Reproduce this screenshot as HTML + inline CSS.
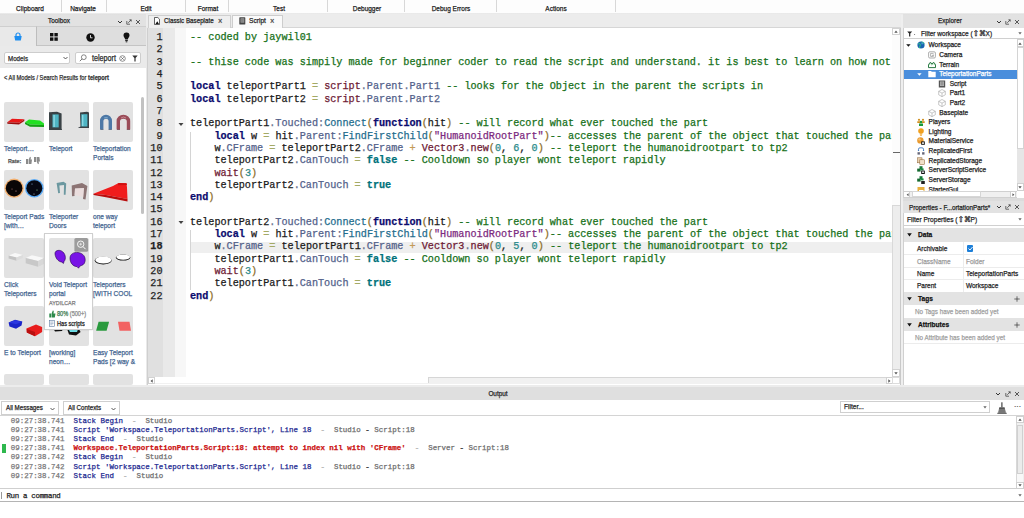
<!DOCTYPE html>
<html><head><meta charset="utf-8"><style>
html,body{margin:0;padding:0;}
body{width:1024px;height:518px;overflow:hidden;position:relative;background:#fff;font-family:"Liberation Sans",sans-serif;}
.r{position:absolute;}
.t{position:absolute;white-space:pre;-webkit-text-stroke:0.25px currentColor;}
.mono{font-family:"Liberation Mono",monospace;}
svg.r{overflow:visible;}
</style></head><body>
<div class="r" style="left:0px;top:0px;width:1024px;height:13px;background:#fdfdfd"></div>
<div class="r" style="left:0px;top:13px;width:1024px;height:2px;background:linear-gradient(#eeeeee,#dcdcdc)"></div>
<div class="r" style="left:60.6px;top:0px;width:0.8px;height:12px;background:#d8d8d8"></div>
<div class="r" style="left:105.5px;top:0px;width:0.8px;height:12px;background:#d8d8d8"></div>
<div class="r" style="left:185.2px;top:0px;width:0.8px;height:12px;background:#d8d8d8"></div>
<div class="r" style="left:228.4px;top:0px;width:0.8px;height:12px;background:#d8d8d8"></div>
<div class="r" style="left:327.2px;top:0px;width:0.8px;height:12px;background:#d8d8d8"></div>
<div class="r" style="left:403.9px;top:0px;width:0.8px;height:12px;background:#d8d8d8"></div>
<div class="r" style="left:496px;top:0px;width:0.8px;height:12px;background:#d8d8d8"></div>
<div class="r" style="left:615.4px;top:0px;width:0.8px;height:12px;background:#d8d8d8"></div>
<div class="t" style="left:-19.85px;top:4.10px;font-size:7.475px;line-height:10px;color:#1a1a1a;font-weight:normal;font-family:'Liberation Sans', sans-serif;transform:scaleX(0.8696);transform-origin:50% 50%;width:100px;text-align:center">Clipboard</div>
<div class="t" style="left:33.44999999999999px;top:4.10px;font-size:7.475px;line-height:10px;color:#1a1a1a;font-weight:normal;font-family:'Liberation Sans', sans-serif;transform:scaleX(0.8696);transform-origin:50% 50%;width:100px;text-align:center">Navigate</div>
<div class="t" style="left:95.94999999999999px;top:4.10px;font-size:7.475px;line-height:10px;color:#1a1a1a;font-weight:normal;font-family:'Liberation Sans', sans-serif;transform:scaleX(0.8696);transform-origin:50% 50%;width:100px;text-align:center">Edit</div>
<div class="t" style="left:157.5px;top:4.10px;font-size:7.475px;line-height:10px;color:#1a1a1a;font-weight:normal;font-family:'Liberation Sans', sans-serif;transform:scaleX(0.8696);transform-origin:50% 50%;width:100px;text-align:center">Format</div>
<div class="t" style="left:228.8px;top:4.10px;font-size:7.475px;line-height:10px;color:#1a1a1a;font-weight:normal;font-family:'Liberation Sans', sans-serif;transform:scaleX(0.8696);transform-origin:50% 50%;width:100px;text-align:center">Test</div>
<div class="t" style="left:316.5px;top:4.10px;font-size:7.475px;line-height:10px;color:#1a1a1a;font-weight:normal;font-family:'Liberation Sans', sans-serif;transform:scaleX(0.8696);transform-origin:50% 50%;width:100px;text-align:center">Debugger</div>
<div class="t" style="left:400.55px;top:4.10px;font-size:7.475px;line-height:10px;color:#1a1a1a;font-weight:normal;font-family:'Liberation Sans', sans-serif;transform:scaleX(0.8696);transform-origin:50% 50%;width:100px;text-align:center">Debug Errors</div>
<div class="t" style="left:506.4000000000001px;top:4.10px;font-size:7.475px;line-height:10px;color:#1a1a1a;font-weight:normal;font-family:'Liberation Sans', sans-serif;transform:scaleX(0.8696);transform-origin:50% 50%;width:100px;text-align:center">Actions</div>
<div class="r" style="left:0px;top:15px;width:1024px;height:370px;background:#dcdcdc"></div>
<div class="r" style="left:0px;top:15px;width:145.5px;height:11.3px;background:#e2e2e2"></div>
<div class="t" style="left:38.5px;top:16.00px;font-size:7.360px;line-height:10px;color:#1e1e1e;font-weight:normal;font-family:'Liberation Sans', sans-serif;transform:scaleX(0.8696);transform-origin:50% 50%;width:40px;text-align:center">Toolbox</div>
<svg class="r" style="left:116.7px;top:18.6px" width="6" height="6" viewBox="0 0 6 6"><path d="M1 2 L3 4 L5 2" stroke="#333" stroke-width="1" fill="none"/></svg>
<svg class="r" style="left:125.5px;top:18.6px" width="6" height="6" viewBox="0 0 6 6"><path d="M0.8 2 V5.2 H4 M2.2 3.8 L5.2 0.8 M3.4 0.8 H5.2 V2.6" stroke="#333" stroke-width="0.7" fill="none"/></svg>
<svg class="r" style="left:135px;top:18.6px" width="6" height="6" viewBox="0 0 6 6"><path d="M1 1 L5 5 M5 1 L1 5" stroke="#333" stroke-width="0.8" fill="none"/></svg>
<div class="r" style="left:0px;top:26.3px;width:145.5px;height:19px;background:#dedede;border-top:0.6px solid #cfcfcf;box-sizing:border-box"></div>
<div class="r" style="left:0px;top:26.3px;width:36.5px;height:19.5px;background:#e9e9e9;border-top:0.6px solid #cfcfcf;border-right:0.8px solid #bdbdbd;box-sizing:border-box"></div>
<div class="r" style="left:36.5px;top:44.6px;width:109px;height:0.9px;background:#c4c4c4"></div>
<svg class="r" style="left:12.5px;top:31.5px" width="10" height="10" viewBox="0 0 10 10"><path d="M3 4 V3 A2 2 0 0 1 7 3 V4" stroke="#1d8ef0" stroke-width="1.2" fill="none"/><path d="M1.3 4 H8.7 L7.8 8.6 H2.2 Z" fill="#1d8ef0"/></svg>
<svg class="r" style="left:49.9px;top:33px" width="8" height="8" viewBox="0 0 8 8"><rect x="0" y="0" width="3.4" height="3.4" fill="#111"/><rect x="4.4" y="0" width="3.4" height="3.4" fill="#111"/><rect x="0" y="4.4" width="3.4" height="3.4" fill="#111"/><rect x="4.4" y="4.4" width="3.4" height="3.4" fill="#111"/></svg>
<svg class="r" style="left:86px;top:32.5px" width="9" height="9" viewBox="0 0 9 9"><circle cx="4.5" cy="4.5" r="4.2" fill="#111"/><path d="M4.5 2 V4.8 H6.5" stroke="#e9e9e9" stroke-width="0.9" fill="none"/></svg>
<svg class="r" style="left:123.2px;top:31.5px" width="7" height="11" viewBox="0 0 7 11"><path d="M3.5 0.5 A3 3 0 0 1 6.5 3.6 C6.5 5.2 5 6 4.8 7.6 H2.2 C2 6 0.5 5.2 0.5 3.6 A3 3 0 0 1 3.5 0.5 Z" fill="#111"/><rect x="2.2" y="8.1" width="2.6" height="1" fill="#111"/><rect x="2.7" y="9.4" width="1.6" height="0.9" fill="#111"/></svg>
<div class="r" style="left:0px;top:45.5px;width:145.5px;height:23.5px;background:#eaeaea"></div>
<div class="r" style="left:4px;top:51.7px;width:66px;height:12.6px;background:#fff;border:0.7px solid #cdcdcd;border-radius:2px;box-sizing:border-box"></div>
<div class="t" style="left:8px;top:53.80px;font-size:7.130px;line-height:10px;color:#2a2a2a;font-weight:normal;font-family:'Liberation Sans', sans-serif;transform:scaleX(0.8696);transform-origin:0 50%;">Models</div>
<svg class="r" style="left:62.5px;top:56px" width="5" height="4" viewBox="0 0 5 4"><path d="M0.5 1 L2.5 3 L4.5 1" stroke="#333" stroke-width="0.8" fill="none"/></svg>
<div class="r" style="left:75px;top:51.7px;width:66px;height:12.6px;background:#fff;border:0.7px solid #cdcdcd;border-radius:2px;box-sizing:border-box"></div>
<svg class="r" style="left:79px;top:54.3px" width="8" height="8" viewBox="0 0 8 8"><circle cx="4.8" cy="3.2" r="2.4" stroke="#555" stroke-width="0.7" fill="none"/><path d="M3.1 4.9 L0.8 7.2" stroke="#555" stroke-width="0.8"/></svg>
<div class="t" style="left:91.8px;top:54.00px;font-size:8.280px;line-height:10px;color:#2a2a2a;font-weight:normal;font-family:'Liberation Sans', sans-serif;transform:scaleX(0.8696);transform-origin:0 50%;">teleport</div>
<svg class="r" style="left:118.7px;top:54.6px" width="7" height="7" viewBox="0 0 7 7"><circle cx="3.5" cy="3.5" r="2.8" stroke="#444" stroke-width="0.6" fill="none"/><path d="M2.2 2.2 L4.8 4.8 M4.8 2.2 L2.2 4.8" stroke="#444" stroke-width="0.6"/></svg>
<svg class="r" style="left:131.5px;top:54.5px" width="6" height="7" viewBox="0 0 6 7"><path d="M0.3 0.5 H5.7 L3.6 3 V6.5 H2.4 V3 Z" fill="#333"/></svg>
<div class="r" style="left:0px;top:68px;width:145.5px;height:317px;background:#fff"></div>
<div class="t" style="left:4.3px;top:73.40px;font-size:6.555px;line-height:10px;color:#333;font-weight:normal;font-family:'Liberation Sans', sans-serif;transform:scaleX(0.8696);transform-origin:0 50%;">&lt; All Models / Search Results for <b>teleport</b></div>
<div class="r" style="left:141.2px;top:97px;width:3px;height:116.5px;background:#c2c2c2;border-radius:1.5px"></div>
<div class="r" style="left:4.3px;top:102px;width:40px;height:40px;background:#e2e2e2;border-radius:2px;overflow:hidden"><svg width="40" height="40" viewBox="0 0 40 40" style="position:absolute;left:0;top:0"><path d="M3.2 20.2 L8 16.8 L20.3 17.3 L15 20.8 Z" fill="#e81818"/><path d="M3.2 20.2 L15 20.8 L15 22.6 L3.4 21.8 Z" fill="#9a0c0c"/><path d="M15 20.8 L20.3 17.3 V19 L15 22.6 Z" fill="#b01010"/><path d="M21 20.2 L25 17.4 L36 18.6 L40 21.5 V23 L26 22.6 Z" fill="#22e022"/><path d="M21 20.2 L26 22.6 L40 23 V25 L26 24.8 L21 22 Z" fill="#14a014"/></svg></div>
<div class="r" style="left:49.1px;top:102px;width:40px;height:40px;background:#e2e2e2;border-radius:2px;overflow:hidden"><svg width="40" height="40" viewBox="0 0 40 40" style="position:absolute;left:0;top:0"><path d="M-0.6 10.2 L8 9.7 L12.6 11.6 V26.6 L13.1 28.1 L-0.6 28.1 Z" fill="#3a4246"/><rect x="3.5" y="12.4" width="6.2" height="13" fill="#4fb5c4"/><rect x="4.5" y="13" width="1.2" height="12" fill="#9ae0ea"/><path d="M31 10.5 L38 9.7 L40 10.5 V26.1 L28.8 26.1 L31.5 24.5 Z" fill="#3a4246"/><rect x="32.3" y="12.2" width="6.1" height="12.3" fill="#4fb5c4"/><rect x="33.2" y="13" width="1.1" height="11" fill="#9ae0ea"/></svg></div>
<div class="r" style="left:93.3px;top:102px;width:40px;height:40px;background:#e2e2e2;border-radius:2px;overflow:hidden"><svg width="40" height="40" viewBox="0 0 40 40" style="position:absolute;left:0;top:0"><path d="M7 27.5 V19 A6 6.3 0 0 1 19 19 V27.5 H15.6 V19.5 A2.6 2.8 0 0 0 10.4 19.5 V27.5 Z" fill="#4d78a6"/><path d="M7.5 27.5 H10.4 V28.1 H7.5 Z M15.6 27.5 H18.8 V28.1 H15.6 Z" fill="#2a3a50"/><path d="M23.6 27.5 V19 A6.8 6.3 0 0 1 37.2 19 V27.5 H33.8 V19.5 A3.4 2.8 0 0 0 27 19.5 V27.5 Z" fill="#9a4c58"/><path d="M24 27.5 H27 V28.1 H24 Z M33.8 27.5 H37 V28.1 H33.8 Z" fill="#502028"/><path d="M11 16 A4 4 0 0 1 15 16" stroke="#8ab8d8" stroke-width="0.7" fill="none"/><path d="M28 16 A4 4 0 0 1 33 16" stroke="#d8a0a8" stroke-width="0.7" fill="none"/></svg></div>
<div class="r" style="left:4.3px;top:170px;width:40px;height:40px;background:#e2e2e2;border-radius:2px;overflow:hidden"><svg width="40" height="40" viewBox="0 0 40 40" style="position:absolute;left:0;top:0"><circle cx="10.1" cy="18.2" r="9.6" fill="#f2b070"/><circle cx="10.1" cy="18.2" r="8.3" fill="#0a0606"/><circle cx="30.3" cy="18.2" r="9.3" fill="#5aaaf5"/><circle cx="30.3" cy="18.2" r="8" fill="#060812"/><circle cx="8" cy="19" r="0.5" fill="#c88"/><circle cx="12" cy="21" r="0.5" fill="#fbb"/><circle cx="28" cy="14" r="0.5" fill="#9cf"/><circle cx="33" cy="20" r="0.5" fill="#afa"/><circle cx="30" cy="24" r="0.5" fill="#ddd"/></svg></div>
<div class="r" style="left:49.1px;top:170px;width:40px;height:40px;background:#e2e2e2;border-radius:2px;overflow:hidden"><svg width="40" height="40" viewBox="0 0 40 40" style="position:absolute;left:0;top:0"><path d="M7.6 13 L14.5 11.7 L17.2 13.5 L16.6 24.7 L14.8 24.7 L15 15 L10.4 15.5 L11 23 L9.2 23.3 Z" fill="#6c98a0"/><path d="M22.7 15.5 L33 13.1 L38.4 16 L36.5 29.5 L34 29 L35 18 L26 18.5 L25.5 26 L23 26.2 Z" fill="#8c7474"/><path d="M26 18.5 L35 18 L34.3 27 L25.5 25 Z" fill="#f0dada" opacity="0.6"/></svg></div>
<div class="r" style="left:93.3px;top:170px;width:40px;height:40px;background:#e2e2e2;border-radius:2px;overflow:hidden"><svg width="40" height="40" viewBox="0 0 40 40" style="position:absolute;left:0;top:0"><path d="M0.4 23.8 L20 16 L25.5 13 L33.5 13.2 L34 17.5 L34.5 29 L13 25 Z" fill="#f01c1c"/><path d="M0.4 23.8 L13 25 L34.5 29 L34.5 31.5 L13 27.2 L0.6 25 Z" fill="#b80c0c"/><path d="M25.5 13 L33.5 13.2 L34 15 L25 15.2 Z" fill="#d01010"/></svg></div>
<div class="r" style="left:4.3px;top:238px;width:40px;height:40px;background:#e2e2e2;border-radius:2px;overflow:hidden"><svg width="40" height="40" viewBox="0 0 40 40" style="position:absolute;left:0;top:0"><path d="M4.6 17.5 L11 15.1 L18.9 17 L12.5 19.6 Z" fill="#f8f8f8"/><path d="M4.6 17.5 L12.5 19.6 V22.7 L4.6 20.4 Z" fill="#c4c4c4"/><path d="M12.5 19.6 L18.9 17 V19.8 L12.5 22.7 Z" fill="#dcdcdc"/><path d="M21.7 20 L28 17.2 L40 20 L34 23 Z" fill="#f8f8f8"/><path d="M21.7 20 L34 23 V28.8 L21.7 25.2 Z" fill="#c8c8c8"/><path d="M34 23 L40 20 V26 L34 28.8 Z" fill="#d8d8d8"/></svg></div>
<div class="r" style="left:93.3px;top:238px;width:40px;height:40px;background:#e2e2e2;border-radius:2px;overflow:hidden"><svg width="40" height="40" viewBox="0 0 40 40" style="position:absolute;left:0;top:0"><ellipse cx="10.2" cy="22.6" rx="8.5" ry="3.9" fill="#111"/><ellipse cx="10.4" cy="22" rx="8.2" ry="3.5" fill="#fff"/><ellipse cx="30.1" cy="19.6" rx="7.2" ry="3" fill="#111"/><ellipse cx="30.2" cy="19.1" rx="6.9" ry="2.7" fill="#fff"/></svg></div>
<div class="r" style="left:4.3px;top:306px;width:40px;height:40px;background:#e2e2e2;border-radius:2px;overflow:hidden"><svg width="40" height="40" viewBox="0 0 40 40" style="position:absolute;left:0;top:0"><path d="M4.6 16.5 L11 13.8 L18.3 15.5 L17.5 19.5 L12 22.7 L5.5 20.5 Z" fill="#1a24c8"/><path d="M5 16.5 L11 14.2 L18 15.8 L12 18.3 Z" fill="#2a36e0"/><path d="M22.4 22.5 L32 18.6 L38.1 21 L38.1 26 L31 30.2 L22.8 26.5 Z" fill="#e81c1c"/><path d="M22.8 23 L31 26 L31 30.2 L22.8 26.5 Z" fill="#b81010"/></svg></div>
<div class="r" style="left:49.1px;top:306px;width:40px;height:40px;background:#e2e2e2;border-radius:2px;overflow:hidden"><svg width="40" height="40" viewBox="0 0 40 40" style="position:absolute;left:0;top:0"><path d="M4.9 23.5 L14 22.7 L13 25 L6 25.4 Z" fill="#111"/><path d="M18 22.7 L30 23 L31.6 26 L27 29.5 L20 28.5 Z" fill="#111"/><path d="M19.5 23 L29 23.3 L28 26 L21 26 Z" fill="#70e0e8"/></svg></div>
<div class="r" style="left:93.3px;top:306px;width:40px;height:40px;background:#e2e2e2;border-radius:2px;overflow:hidden"><svg width="40" height="40" viewBox="0 0 40 40" style="position:absolute;left:0;top:0"><path d="M5.6 15.8 L16.1 15.8 L13.6 24.7 L3.1 24.7 Z" fill="#2a9a3e"/><path d="M25 15.8 L36.5 15.8 L38 24.7 L26.5 24.7 Z" fill="#f26262"/></svg></div>
<div class="r" style="left:4.3px;top:374px;width:40px;height:11px;background:#e2e2e2;border-radius:2px;overflow:hidden"><svg width="40" height="40" viewBox="0 0 40 40" style="position:absolute;left:0;top:0"></svg></div>
<div class="r" style="left:49.1px;top:374px;width:40px;height:11px;background:#e2e2e2;border-radius:2px;overflow:hidden"><svg width="40" height="40" viewBox="0 0 40 40" style="position:absolute;left:0;top:0"></svg></div>
<div class="r" style="left:93.3px;top:374px;width:40px;height:11px;background:#e2e2e2;border-radius:2px;overflow:hidden"><svg width="40" height="40" viewBox="0 0 40 40" style="position:absolute;left:0;top:0"></svg></div>
<div class="r" style="left:44.2px;top:232.6px;width:49.3px;height:97.6px;background:#fff;border:0.7px solid #cfcfcf;box-sizing:border-box;box-shadow:0 0.5px 1.5px rgba(0,0,0,0.12)"></div>
<div class="r" style="left:49.1px;top:238px;width:40px;height:40px;background:#e2e2e2;border-radius:2px;overflow:hidden"><svg width="40" height="40" viewBox="0 0 40 40" style="position:absolute;left:0;top:0"><path d="M6 16 C5.6 12.6 9.5 11.5 12.5 13 C16.5 15 17.5 21 15 23.5 L14.5 25.4 L12.5 24 C9 23.5 6.5 20 6 16Z" fill="#7814e6" stroke="#2a0050" stroke-width="0.6"/><path d="M21 20.5 C20.8 16 25 14 29 14.5 C34 15 37 19 36 23.5 C35.5 26.5 33 27.5 31 28 L29.5 30.2 L28 28.6 C24 28.5 21.2 25 21 20.5Z" fill="#7814e6" stroke="#2a0050" stroke-width="0.6"/><rect x="25.4" y="0.1" width="13.7" height="13.7" rx="1.5" fill="#9c9c9c"/><circle cx="31.7" cy="6.2" r="3.2" stroke="#fff" stroke-width="0.9" fill="none"/><path d="M34 8.6 L36.6 11.2" stroke="#fff" stroke-width="1"/><path d="M30.2 6.2 H33.2 M31.7 4.7 V7.7" stroke="#fff" stroke-width="0.6"/></svg></div>
<div class="t" style="left:4.2px;top:143.80px;font-size:7.590px;line-height:10px;color:#41638f;font-weight:normal;font-family:'Liberation Sans', sans-serif;transform:scaleX(0.8696);transform-origin:0 50%;">Teleport…</div>
<div class="t" style="left:49.0px;top:143.80px;font-size:7.590px;line-height:10px;color:#41638f;font-weight:normal;font-family:'Liberation Sans', sans-serif;transform:scaleX(0.8696);transform-origin:0 50%;">Teleport</div>
<div class="t" style="left:93.2px;top:143.80px;font-size:7.590px;line-height:10px;color:#41638f;font-weight:normal;font-family:'Liberation Sans', sans-serif;transform:scaleX(0.8696);transform-origin:0 50%;">Teleportation</div>
<div class="t" style="left:93.2px;top:152.70px;font-size:7.590px;line-height:10px;color:#41638f;font-weight:normal;font-family:'Liberation Sans', sans-serif;transform:scaleX(0.8696);transform-origin:0 50%;">Portals</div>
<div class="t" style="left:8px;top:156.00px;font-size:6.095px;line-height:10px;color:#555;font-weight:bold;font-family:'Liberation Sans', sans-serif;transform:scaleX(0.8696);transform-origin:0 50%;">Rate:</div>
<svg class="r" style="left:24.5px;top:156px" width="16" height="9" viewBox="0 0 16 9"><path d="M1 8 V3 H3 V8 Z M3.6 8 V3.5 L5 0.8 C5.8 0.8 6 1.5 5.8 2.5 L5.5 3.4 H7 L6.4 8 Z" fill="#8a8a8a"/><path d="M9 1 V6 H11 V1 Z M11.6 1 V5.5 L13 8.2 C13.8 8.2 14 7.5 13.8 6.5 L13.5 5.6 H15 L14.4 1 Z" fill="#8a8a8a"/></svg>
<div class="t" style="left:4.2px;top:211.80px;font-size:7.590px;line-height:10px;color:#41638f;font-weight:normal;font-family:'Liberation Sans', sans-serif;transform:scaleX(0.8696);transform-origin:0 50%;">Teleport Pads</div>
<div class="t" style="left:4.2px;top:220.70px;font-size:7.590px;line-height:10px;color:#41638f;font-weight:normal;font-family:'Liberation Sans', sans-serif;transform:scaleX(0.8696);transform-origin:0 50%;">[with…</div>
<div class="t" style="left:49.0px;top:211.80px;font-size:7.590px;line-height:10px;color:#41638f;font-weight:normal;font-family:'Liberation Sans', sans-serif;transform:scaleX(0.8696);transform-origin:0 50%;">Teleporter</div>
<div class="t" style="left:49.0px;top:220.70px;font-size:7.590px;line-height:10px;color:#41638f;font-weight:normal;font-family:'Liberation Sans', sans-serif;transform:scaleX(0.8696);transform-origin:0 50%;">Doors</div>
<div class="t" style="left:93.2px;top:211.80px;font-size:7.590px;line-height:10px;color:#41638f;font-weight:normal;font-family:'Liberation Sans', sans-serif;transform:scaleX(0.8696);transform-origin:0 50%;">one way</div>
<div class="t" style="left:93.2px;top:220.70px;font-size:7.590px;line-height:10px;color:#41638f;font-weight:normal;font-family:'Liberation Sans', sans-serif;transform:scaleX(0.8696);transform-origin:0 50%;">teleport</div>
<div class="t" style="left:4.2px;top:279.80px;font-size:7.590px;line-height:10px;color:#41638f;font-weight:normal;font-family:'Liberation Sans', sans-serif;transform:scaleX(0.8696);transform-origin:0 50%;">Click</div>
<div class="t" style="left:4.2px;top:288.70px;font-size:7.590px;line-height:10px;color:#41638f;font-weight:normal;font-family:'Liberation Sans', sans-serif;transform:scaleX(0.8696);transform-origin:0 50%;">Teleporters</div>
<div class="t" style="left:49.0px;top:279.80px;font-size:7.590px;line-height:10px;color:#41638f;font-weight:normal;font-family:'Liberation Sans', sans-serif;transform:scaleX(0.8696);transform-origin:0 50%;">Void Teleport</div>
<div class="t" style="left:49.0px;top:288.70px;font-size:7.590px;line-height:10px;color:#41638f;font-weight:normal;font-family:'Liberation Sans', sans-serif;transform:scaleX(0.8696);transform-origin:0 50%;">portal</div>
<div class="t" style="left:93.2px;top:279.80px;font-size:7.590px;line-height:10px;color:#41638f;font-weight:normal;font-family:'Liberation Sans', sans-serif;transform:scaleX(0.8696);transform-origin:0 50%;">Teleporters</div>
<div class="t" style="left:93.2px;top:288.70px;font-size:7.590px;line-height:10px;color:#41638f;font-weight:normal;font-family:'Liberation Sans', sans-serif;transform:scaleX(0.8696);transform-origin:0 50%;">[WITH COOL</div>
<div class="t" style="left:49.4px;top:298.20px;font-size:6.210px;line-height:10px;color:#7a7a7a;font-weight:normal;font-family:'Liberation Sans', sans-serif;transform:scaleX(0.8696);transform-origin:0 50%;">AYDILCAR</div>
<svg class="r" style="left:48.5px;top:309.5px" width="7" height="8" viewBox="0 0 7 8"><path d="M0.3 7.5 V3.6 H2 V7.5 Z M2.5 7.5 V3.8 L3.8 0.5 C4.6 0.5 4.9 1.2 4.7 2.2 L4.4 3.4 H6.5 L5.8 7.5 Z" fill="#2d8a4a"/></svg>
<div class="t" style="left:56.5px;top:308.60px;font-size:6.440px;line-height:10px;color:#8a8a8a;font-weight:normal;font-family:'Liberation Sans', sans-serif;transform:scaleX(0.8696);transform-origin:0 50%;"><span style="color:#3a7a50">80%</span> (500+)</div>
<svg class="r" style="left:48.8px;top:320px" width="6" height="7" viewBox="0 0 6 7"><rect x="0.4" y="0.4" width="5" height="6" fill="#fff" stroke="#5a7aa0" stroke-width="0.6"/><path d="M1.3 2 H4.5 M1.3 3.4 H4.5 M1.3 4.8 H3.5" stroke="#5a7aa0" stroke-width="0.5"/></svg>
<div class="t" style="left:57px;top:318.60px;font-size:6.440px;line-height:10px;color:#222;font-weight:normal;font-family:'Liberation Sans', sans-serif;transform:scaleX(0.8696);transform-origin:0 50%;">Has scripts</div>
<div class="t" style="left:4.2px;top:347.80px;font-size:7.590px;line-height:10px;color:#41638f;font-weight:normal;font-family:'Liberation Sans', sans-serif;transform:scaleX(0.8696);transform-origin:0 50%;">E to Teleport</div>
<div class="t" style="left:49.0px;top:347.80px;font-size:7.590px;line-height:10px;color:#41638f;font-weight:normal;font-family:'Liberation Sans', sans-serif;transform:scaleX(0.8696);transform-origin:0 50%;">[working]</div>
<div class="t" style="left:49.0px;top:356.70px;font-size:7.590px;line-height:10px;color:#41638f;font-weight:normal;font-family:'Liberation Sans', sans-serif;transform:scaleX(0.8696);transform-origin:0 50%;">neon…</div>
<div class="t" style="left:93.2px;top:347.80px;font-size:7.590px;line-height:10px;color:#41638f;font-weight:normal;font-family:'Liberation Sans', sans-serif;transform:scaleX(0.8696);transform-origin:0 50%;">Easy Teleport</div>
<div class="t" style="left:93.2px;top:356.70px;font-size:7.590px;line-height:10px;color:#41638f;font-weight:normal;font-family:'Liberation Sans', sans-serif;transform:scaleX(0.8696);transform-origin:0 50%;">Pads [2 way &amp;</div>
<div class="r" style="left:145.5px;top:15px;width:2.2px;height:370px;background:#e9e9e9"></div>
<div class="r" style="left:147px;top:27.6px;width:0.8px;height:357px;background:#cfcfcf"></div>
<div class="r" style="left:145.5px;top:13.5px;width:757.8px;height:13.3px;background:#ececec"></div>
<div class="r" style="left:147.7px;top:26.6px;width:752px;height:0.9px;background:#d6d6d6"></div>
<div class="r" style="left:148px;top:15px;width:82.8px;height:12.6px;background:#efefef;border:0.7px solid #cfcfcf;border-bottom:none;box-sizing:border-box"></div>
<svg class="r" style="left:154.3px;top:17.3px" width="6" height="8" viewBox="0 0 6 8"><path d="M0.5 0.5 H3.8 L5.5 2.2 V7.5 H0.5 Z" fill="#fff" stroke="#222" stroke-width="0.7"/><path d="M1.5 7 L3.2 4.2 L5 7 Z" fill="#111"/></svg>
<div class="t" style="left:164px;top:16.30px;font-size:7.199px;line-height:10px;color:#222;font-weight:normal;font-family:'Liberation Sans', sans-serif;transform:scaleX(0.8696);transform-origin:0 50%;">Classic Baseplate</div>
<div class="t" style="left:217.6px;top:16.30px;font-size:8.625px;line-height:10px;color:#444;font-weight:normal;font-family:'Liberation Sans', sans-serif;transform:scaleX(0.8696);transform-origin:0 50%;">×</div>
<div class="r" style="left:231.5px;top:14.5px;width:51px;height:13.3px;background:#fafafa;border:0.7px solid #cdcdcd;border-bottom:none;box-sizing:border-box"></div>
<svg class="r" style="left:238.8px;top:17.4px" width="7" height="8" viewBox="0 0 7 8"><rect x="0.3" y="0.3" width="6" height="7.2" rx="0.6" fill="#444"/><rect x="1.6" y="1.4" width="3.6" height="4.2" fill="#aaa"/><path d="M2 2.5 H4.8 M2 3.6 H4.8 M2 4.7 H4.8" stroke="#444" stroke-width="0.4"/></svg>
<div class="t" style="left:248.8px;top:16.30px;font-size:7.647px;line-height:10px;color:#222;font-weight:normal;font-family:'Liberation Sans', sans-serif;transform:scaleX(0.8696);transform-origin:0 50%;">Script</div>
<div class="t" style="left:270px;top:16.30px;font-size:8.625px;line-height:10px;color:#444;font-weight:normal;font-family:'Liberation Sans', sans-serif;transform:scaleX(0.8696);transform-origin:0 50%;">×</div>
<div class="r" style="left:147.7px;top:27.6px;width:752.3px;height:357px;background:#fff"></div>
<div class="r" style="left:147.7px;top:27.6px;width:15px;height:349px;background:#e0e0e0"></div>
<div class="r" style="left:162.7px;top:27.6px;width:12.3px;height:349px;background:#e9e9e9"></div>
<div class="r" style="left:175px;top:27.6px;width:11px;height:349px;background:#f7f7f7"></div>
<div class="t mono" style="left:147.7px;width:14.8px;text-align:right;top:32.10px;line-height:12.31px;font-size:10.16px;color:#222;">1</div>
<div class="t mono" style="left:190px;width:703.2px;overflow:hidden;top:32.10px;line-height:12.31px;font-size:10.16px"><span style="color:#167018;">-- coded by jaywil01</span></div>
<div class="t mono" style="left:147.7px;width:14.8px;text-align:right;top:44.41px;line-height:12.31px;font-size:10.16px;color:#222;">2</div>
<div class="t mono" style="left:147.7px;width:14.8px;text-align:right;top:56.72px;line-height:12.31px;font-size:10.16px;color:#222;">3</div>
<div class="t mono" style="left:190px;width:703.2px;overflow:hidden;top:56.72px;line-height:12.31px;font-size:10.16px"><span style="color:#167018;">-- thise code was simpily made for beginner coder to read the script and understand. it is best to learn on how not to</span></div>
<div class="t mono" style="left:147.7px;width:14.8px;text-align:right;top:69.03px;line-height:12.31px;font-size:10.16px;color:#222;">4</div>
<div class="t mono" style="left:147.7px;width:14.8px;text-align:right;top:81.34px;line-height:12.31px;font-size:10.16px;color:#222;">5</div>
<div class="t mono" style="left:190px;width:703.2px;overflow:hidden;top:81.34px;line-height:12.31px;font-size:10.16px"><span style="color:#0b0b6e;font-weight:bold;">local</span> <span style="color:#1a1a1a;">teleportPart1</span> <span style="color:#a4aa66;">=</span> <span style="color:#6e1a34;">script</span><span style="color:#66708c;">.</span><span style="color:#53618a;">Parent</span><span style="color:#66708c;">.</span><span style="color:#53618a;">Part1</span> <span style="color:#167018;">-- looks for the Object in the parent the scripts in</span></div>
<div class="t mono" style="left:147.7px;width:14.8px;text-align:right;top:93.65px;line-height:12.31px;font-size:10.16px;color:#222;">6</div>
<div class="t mono" style="left:190px;width:703.2px;overflow:hidden;top:93.65px;line-height:12.31px;font-size:10.16px"><span style="color:#0b0b6e;font-weight:bold;">local</span> <span style="color:#1a1a1a;">teleportPart2</span> <span style="color:#a4aa66;">=</span> <span style="color:#6e1a34;">script</span><span style="color:#66708c;">.</span><span style="color:#53618a;">Parent</span><span style="color:#66708c;">.</span><span style="color:#53618a;">Part2</span></div>
<div class="t mono" style="left:147.7px;width:14.8px;text-align:right;top:105.96px;line-height:12.31px;font-size:10.16px;color:#222;">7</div>
<div class="t mono" style="left:147.7px;width:14.8px;text-align:right;top:118.27px;line-height:12.31px;font-size:10.16px;color:#222;">8</div>
<div class="t mono" style="left:190px;width:703.2px;overflow:hidden;top:118.27px;line-height:12.31px;font-size:10.16px"><span style="color:#1a1a1a;">teleportPart1</span><span style="color:#66708c;">.</span><span style="color:#53618a;">Touched</span><span style="color:#66708c;">:</span><span style="color:#1f6d8e;">Connect</span><span style="color:#8c6d2a;">(</span><span style="color:#0b0b6e;font-weight:bold;">function</span><span style="color:#8c6d2a;">(</span><span style="color:#1a1a1a;">hit</span><span style="color:#8c6d2a;">)</span> <span style="color:#167018;">-- will record what ever touched the part</span></div>
<div class="t mono" style="left:147.7px;width:14.8px;text-align:right;top:130.58px;line-height:12.31px;font-size:10.16px;color:#222;">9</div>
<div class="t mono" style="left:190px;width:703.2px;overflow:hidden;top:130.58px;line-height:12.31px;font-size:10.16px">    <span style="color:#0b0b6e;font-weight:bold;">local</span> <span style="color:#1a1a1a;">w</span> <span style="color:#a4aa66;">=</span> <span style="color:#1a1a1a;">hit</span><span style="color:#66708c;">.</span><span style="color:#53618a;">Parent</span><span style="color:#66708c;">:</span><span style="color:#1f6d8e;">FindFirstChild</span><span style="color:#8c6d2a;">(</span><span style="color:#7d2a80;">&quot;HumanoidRootPart&quot;</span><span style="color:#8c6d2a;">)</span><span style="color:#167018;">-- accesses the parent of the object that touched the part</span></div>
<div class="t mono" style="left:147.7px;width:14.8px;text-align:right;top:142.89px;line-height:12.31px;font-size:10.16px;color:#222;">10</div>
<div class="t mono" style="left:190px;width:703.2px;overflow:hidden;top:142.89px;line-height:12.31px;font-size:10.16px">    <span style="color:#1a1a1a;">w</span><span style="color:#66708c;">.</span><span style="color:#53618a;">CFrame</span> <span style="color:#a4aa66;">=</span> <span style="color:#1a1a1a;">teleportPart2</span><span style="color:#66708c;">.</span><span style="color:#53618a;">CFrame</span> <span style="color:#c49a58;">+</span> <span style="color:#6e1a34;">Vector3</span><span style="color:#66708c;">.</span><span style="color:#6e1a34;">new</span><span style="color:#8c6d2a;">(</span><span style="color:#2a8a8a;">0</span><span style="color:#1a1a1a;">,</span> <span style="color:#2a8a8a;">6</span><span style="color:#1a1a1a;">,</span> <span style="color:#2a8a8a;">0</span><span style="color:#8c6d2a;">)</span> <span style="color:#167018;">-- teleport the humanoidrootpart to tp2</span></div>
<div class="t mono" style="left:147.7px;width:14.8px;text-align:right;top:155.20px;line-height:12.31px;font-size:10.16px;color:#222;">11</div>
<div class="t mono" style="left:190px;width:703.2px;overflow:hidden;top:155.20px;line-height:12.31px;font-size:10.16px">    <span style="color:#1a1a1a;">teleportPart2</span><span style="color:#66708c;">.</span><span style="color:#53618a;">CanTouch</span> <span style="color:#a4aa66;">=</span> <span style="color:#00727a;font-weight:bold;">false</span> <span style="color:#167018;">-- Cooldown so player wont teleport rapidly</span></div>
<div class="t mono" style="left:147.7px;width:14.8px;text-align:right;top:167.51px;line-height:12.31px;font-size:10.16px;color:#222;">12</div>
<div class="t mono" style="left:190px;width:703.2px;overflow:hidden;top:167.51px;line-height:12.31px;font-size:10.16px">    <span style="color:#6e1a34;">wait</span><span style="color:#8c6d2a;">(</span><span style="color:#2a8a8a;">3</span><span style="color:#8c6d2a;">)</span></div>
<div class="t mono" style="left:147.7px;width:14.8px;text-align:right;top:179.82px;line-height:12.31px;font-size:10.16px;color:#222;">13</div>
<div class="t mono" style="left:190px;width:703.2px;overflow:hidden;top:179.82px;line-height:12.31px;font-size:10.16px">    <span style="color:#1a1a1a;">teleportPart2</span><span style="color:#66708c;">.</span><span style="color:#53618a;">CanTouch</span> <span style="color:#a4aa66;">=</span> <span style="color:#00727a;font-weight:bold;">true</span></div>
<div class="t mono" style="left:147.7px;width:14.8px;text-align:right;top:192.13px;line-height:12.31px;font-size:10.16px;color:#222;">14</div>
<div class="t mono" style="left:190px;width:703.2px;overflow:hidden;top:192.13px;line-height:12.31px;font-size:10.16px"><span style="color:#0b0b6e;font-weight:bold;">end</span><span style="color:#8c6d2a;">)</span></div>
<div class="t mono" style="left:147.7px;width:14.8px;text-align:right;top:204.44px;line-height:12.31px;font-size:10.16px;color:#222;">15</div>
<div class="t mono" style="left:147.7px;width:14.8px;text-align:right;top:216.75px;line-height:12.31px;font-size:10.16px;color:#222;">16</div>
<div class="t mono" style="left:190px;width:703.2px;overflow:hidden;top:216.75px;line-height:12.31px;font-size:10.16px"><span style="color:#1a1a1a;">teleportPart2</span><span style="color:#66708c;">.</span><span style="color:#53618a;">Touched</span><span style="color:#66708c;">:</span><span style="color:#1f6d8e;">Connect</span><span style="color:#8c6d2a;">(</span><span style="color:#0b0b6e;font-weight:bold;">function</span><span style="color:#8c6d2a;">(</span><span style="color:#1a1a1a;">hit</span><span style="color:#8c6d2a;">)</span> <span style="color:#167018;">-- will record what ever touched the part</span></div>
<div class="t mono" style="left:147.7px;width:14.8px;text-align:right;top:229.06px;line-height:12.31px;font-size:10.16px;color:#222;">17</div>
<div class="t mono" style="left:190px;width:703.2px;overflow:hidden;top:229.06px;line-height:12.31px;font-size:10.16px">    <span style="color:#0b0b6e;font-weight:bold;">local</span> <span style="color:#1a1a1a;">w</span> <span style="color:#a4aa66;">=</span> <span style="color:#1a1a1a;">hit</span><span style="color:#66708c;">.</span><span style="color:#53618a;">Parent</span><span style="color:#66708c;">:</span><span style="color:#1f6d8e;">FindFirstChild</span><span style="color:#8c6d2a;">(</span><span style="color:#7d2a80;">&quot;HumanoidRootPart&quot;</span><span style="color:#8c6d2a;">)</span><span style="color:#167018;">-- accesses the parent of the object that touched the part</span></div>
<div class="r" style="left:190px;top:241.57px;width:702px;height:11.91px;background:#efefef"></div>
<div class="t mono" style="left:147.7px;width:14.8px;text-align:right;top:241.37px;line-height:12.31px;font-size:10.16px;color:#222;font-weight:bold;">18</div>
<div class="t mono" style="left:190px;width:703.2px;overflow:hidden;top:241.37px;line-height:12.31px;font-size:10.16px">    <span style="color:#1a1a1a;">w</span><span style="color:#66708c;">.</span><span style="color:#53618a;">CFrame</span> <span style="color:#a4aa66;">=</span> <span style="color:#1a1a1a;">teleportPart1</span><span style="color:#66708c;">.</span><span style="color:#53618a;">CFrame</span> <span style="color:#c49a58;">+</span> <span style="color:#6e1a34;">Vector3</span><span style="color:#66708c;">.</span><span style="color:#6e1a34;">new</span><span style="color:#8c6d2a;">(</span><span style="color:#2a8a8a;">0</span><span style="color:#1a1a1a;">,</span> <span style="color:#2a8a8a;">5</span><span style="color:#1a1a1a;">,</span> <span style="color:#2a8a8a;">0</span><span style="color:#8c6d2a;">)</span> <span style="color:#167018;">-- teleport the humanoidrootpart to tp2</span></div>
<div class="t mono" style="left:147.7px;width:14.8px;text-align:right;top:253.68px;line-height:12.31px;font-size:10.16px;color:#222;">19</div>
<div class="t mono" style="left:190px;width:703.2px;overflow:hidden;top:253.68px;line-height:12.31px;font-size:10.16px">    <span style="color:#1a1a1a;">teleportPart1</span><span style="color:#66708c;">.</span><span style="color:#53618a;">CanTouch</span> <span style="color:#a4aa66;">=</span> <span style="color:#00727a;font-weight:bold;">false</span> <span style="color:#167018;">-- Cooldown so player wont teleport rapidly</span></div>
<div class="t mono" style="left:147.7px;width:14.8px;text-align:right;top:265.99px;line-height:12.31px;font-size:10.16px;color:#222;">20</div>
<div class="t mono" style="left:190px;width:703.2px;overflow:hidden;top:265.99px;line-height:12.31px;font-size:10.16px">    <span style="color:#6e1a34;">wait</span><span style="color:#8c6d2a;">(</span><span style="color:#2a8a8a;">3</span><span style="color:#8c6d2a;">)</span></div>
<div class="t mono" style="left:147.7px;width:14.8px;text-align:right;top:278.30px;line-height:12.31px;font-size:10.16px;color:#222;">21</div>
<div class="t mono" style="left:190px;width:703.2px;overflow:hidden;top:278.30px;line-height:12.31px;font-size:10.16px">    <span style="color:#1a1a1a;">teleportPart1</span><span style="color:#66708c;">.</span><span style="color:#53618a;">CanTouch</span> <span style="color:#a4aa66;">=</span> <span style="color:#00727a;font-weight:bold;">true</span></div>
<div class="t mono" style="left:147.7px;width:14.8px;text-align:right;top:290.61px;line-height:12.31px;font-size:10.16px;color:#222;">22</div>
<div class="t mono" style="left:190px;width:703.2px;overflow:hidden;top:290.61px;line-height:12.31px;font-size:10.16px"><span style="color:#0b0b6e;font-weight:bold;">end</span><span style="color:#8c6d2a;">)</span></div>
<svg class="r" style="left:178px;top:121.93px" width="6" height="5" viewBox="0 0 6 5"><path d="M0.5 1 H5.5 L3 4 Z" fill="#444"/></svg>
<div class="r" style="left:190px;top:131.58px;width:0.7px;height:59.550000000000004px;background:#d4d4d4"></div>
<svg class="r" style="left:178px;top:220.41px" width="6" height="5" viewBox="0 0 6 5"><path d="M0.5 1 H5.5 L3 4 Z" fill="#444"/></svg>
<div class="r" style="left:190px;top:230.06px;width:0.7px;height:59.550000000000004px;background:#d4d4d4"></div>
<div class="r" style="left:892.4px;top:27.6px;width:7.5px;height:349px;background:#ededed;border-left:0.7px solid #d9d9d9;box-sizing:border-box"></div>
<div class="r" style="left:892.4px;top:35.4px;width:7.2px;height:171px;background:#fcfcfc;border-bottom:0.7px solid #d8d8d8;box-sizing:border-box"></div>
<div class="r" style="left:892.4px;top:27.6px;width:7.5px;height:7.8px;background:#fff;border:0.7px solid #d2d2d2;box-sizing:border-box"></div>
<svg class="r" style="left:894.2px;top:29.8px" width="4" height="3" viewBox="0 0 4 3"><path d="M0.3 2.7 L2 0.5 L3.7 2.7 Z" fill="#555"/></svg>
<div class="r" style="left:892.4px;top:369.2px;width:7.5px;height:7.4px;background:#fff;border:0.7px solid #d2d2d2;box-sizing:border-box"></div>
<svg class="r" style="left:894.2px;top:371.6px" width="4" height="3" viewBox="0 0 4 3"><path d="M0.3 0.3 L2 2.5 L3.7 0.3 Z" fill="#555"/></svg>
<div class="r" style="left:147.7px;top:376.6px;width:745px;height:7.2px;background:#f1f1f1;border-top:0.7px solid #d6d6d6;box-sizing:border-box"></div>
<div class="r" style="left:147.7px;top:376.6px;width:7.2px;height:7.2px;background:#fff;border:0.7px solid #d2d2d2;box-sizing:border-box"></div>
<svg class="r" style="left:150px;top:378.5px" width="3" height="4" viewBox="0 0 3 4"><path d="M2.7 0.3 L0.5 2 L2.7 3.7 Z" fill="#555"/></svg>
<div class="r" style="left:155px;top:376.9px;width:274.2px;height:6.4px;background:#fff;border-right:0.7px solid #d6d6d6;box-sizing:border-box"></div>
<div class="r" style="left:885.5px;top:376.6px;width:7px;height:7.2px;background:#fff;border:0.7px solid #d2d2d2;box-sizing:border-box"></div>
<svg class="r" style="left:887.8px;top:378.5px" width="3" height="4" viewBox="0 0 3 4"><path d="M0.3 0.3 L2.5 2 L0.3 3.7 Z" fill="#555"/></svg>
<div class="r" style="left:892.4px;top:376.6px;width:7.5px;height:7.2px;background:#fff;border:0.7px solid #dcdcdc;box-sizing:border-box"></div>
<div class="r" style="left:899.6px;top:27.6px;width:1.4px;height:357px;background:#c9c9c9"></div>
<div class="r" style="left:901px;top:15px;width:2.3px;height:370px;background:#efefef"></div>
<div class="r" style="left:893.2px;top:151.6px;width:6.8px;height:0.9px;background:#666"></div>
<div class="r" style="left:903.3px;top:15px;width:120.7px;height:12.7px;background:#e2e2e2"></div>
<div class="t" style="left:930px;top:16.40px;font-size:7.360px;line-height:10px;color:#1e1e1e;font-weight:normal;font-family:'Liberation Sans', sans-serif;transform:scaleX(0.8696);transform-origin:50% 50%;width:40px;text-align:center">Explorer</div>
<svg class="r" style="left:996.3px;top:18.8px" width="6" height="6" viewBox="0 0 6 6"><path d="M1 2 L3 4 L5 2" stroke="#333" stroke-width="1" fill="none"/></svg>
<svg class="r" style="left:1004.6px;top:18.8px" width="6" height="6" viewBox="0 0 6 6"><path d="M0.8 2 V5.2 H4 M2.2 3.8 L5.2 0.8 M3.4 0.8 H5.2 V2.6" stroke="#333" stroke-width="0.7" fill="none"/></svg>
<svg class="r" style="left:1014.3px;top:18.8px" width="6" height="6" viewBox="0 0 6 6"><path d="M1 1 L5 5 M5 1 L1 5" stroke="#333" stroke-width="0.8" fill="none"/></svg>
<div class="r" style="left:903.3px;top:27.7px;width:120.7px;height:11.6px;background:#fff;border-bottom:0.7px solid #d0d0d0;border-left:0.7px solid #d0d0d0;box-sizing:border-box"></div>
<svg class="r" style="left:906.5px;top:30.8px" width="10" height="6" viewBox="0 0 10 6"><path d="M0.2 0.5 H5.2 L3.3 2.5 V5.5 H2.1 V2.5 Z" fill="#222"/><circle cx="7.6" cy="3.6" r="0.5" fill="#555"/></svg>
<div class="t" style="left:920.7px;top:28.50px;font-size:7.532px;line-height:10px;color:#1e1e1e;font-weight:normal;font-family:'Liberation Sans', sans-serif;transform:scaleX(0.8696);transform-origin:0 50%;">Filter workspace (⇧⌘X)</div>
<svg class="r" style="left:1017.5px;top:32px" width="4" height="3" viewBox="0 0 4 3"><path d="M0.3 0.3 L2 2.5 L3.7 0.3 Z" fill="#666"/></svg>
<div class="r" style="left:903.3px;top:39.3px;width:113.5px;height:151.5px;background:#fff;border-left:0.7px solid #d0d0d0;box-sizing:border-box"></div>
<div class="r" style="left:903.3px;top:39.3px;width:113.5px;height:151.5px;overflow:hidden">
<svg class="r" style="left:3.20px;top:4.50px" width="5" height="3" viewBox="0 0 5 3"><path d="M0.2 0.2 H4.6 L2.4 2.8 Z" fill="#111"/></svg>
<svg class="r" style="left:13.80px;top:2.10px" width="8" height="8" viewBox="0 0 8 8"><circle cx="4" cy="4" r="3.6" fill="#1b64b0"/><path d="M1 3.2 C2 2.2 3.6 2.6 3.4 4 C3.2 5.2 2.2 5.6 2.6 7 M4.6 0.6 C5 1.8 6 2.2 7.3 2.4" stroke="#2ab090" stroke-width="1.2" fill="none"/><circle cx="5.2" cy="2.6" r="1" fill="#5ab0e8" opacity="0.6"/></svg>
<div class="t" style="left:25.30px;top:1.10px;font-size:6.5px;line-height:10px;color:#1e1e1e">Workspace</div>
<svg class="r" style="left:24.40px;top:11.71px" width="8" height="8" viewBox="0 0 8 8"><rect x="0.6" y="0.8" width="6.8" height="6.2" rx="1.2" fill="#fff" stroke="#777" stroke-width="0.6"/><path d="M5.6 2.4 H2.6 V5.4 H5.4 V3.8 L3.8 4.8" fill="none" stroke="#777" stroke-width="0.55"/></svg>
<div class="t" style="left:35.90px;top:10.71px;font-size:6.5px;line-height:10px;color:#1e1e1e">Camera</div>
<svg class="r" style="left:24.40px;top:21.32px" width="8" height="8" viewBox="0 0 8 8"><path d="M0.5 6.6 V3.6 L2.4 1.2 L4 3 L5.6 1.2 L7.5 3.6 V6.6 Z" fill="#fff" stroke="#156a30" stroke-width="0.9"/><path d="M0.5 4.6 L2.4 2.6 L4 4.2 L5.6 2.6 L7.5 4.6" stroke="#2a9a4a" stroke-width="0.5" fill="none"/></svg>
<div class="t" style="left:35.90px;top:20.32px;font-size:6.5px;line-height:10px;color:#1e1e1e">Terrain</div>
<div class="r" style="left:0.7px;top:30.63px;width:112.8px;height:8.6px;background:#4a8edc"></div>
<svg class="r" style="left:13.80px;top:33.33px" width="5" height="3" viewBox="0 0 5 3"><path d="M0.2 0.2 H4.6 L2.4 2.8 Z" fill="#fff"/></svg>
<svg class="r" style="left:24.40px;top:30.93px" width="8" height="8" viewBox="0 0 8 8"><path d="M0.3 1 H3 L3.8 1.8 H7.7 V7.2 H0.3 Z" fill="#fff"/></svg>
<div class="t" style="left:35.90px;top:29.93px;font-size:6.5px;line-height:10px;color:#fff">TeleportationParts</div>
<svg class="r" style="left:34.90px;top:40.54px" width="8" height="8" viewBox="0 0 8 8"><rect x="0.8" y="0.5" width="6.4" height="7" fill="#555"/><rect x="2" y="1.5" width="4" height="4.5" fill="#bbb"/><path d="M2.5 2.7 H5.5 M2.5 3.8 H5.5 M2.5 4.9 H5.5" stroke="#555" stroke-width="0.45"/></svg>
<div class="t" style="left:46.40px;top:39.54px;font-size:6.5px;line-height:10px;color:#1e1e1e">Script</div>
<svg class="r" style="left:34.90px;top:50.15px" width="8" height="8" viewBox="0 0 8 8"><path d="M4 0.5 L7.3 2.3 V5.8 L4 7.6 L0.7 5.8 V2.3 Z M0.7 2.3 L4 4.1 L7.3 2.3 M4 4.1 V7.6" fill="none" stroke="#9a9a9a" stroke-width="0.55"/></svg>
<div class="t" style="left:46.40px;top:49.15px;font-size:6.5px;line-height:10px;color:#1e1e1e">Part1</div>
<svg class="r" style="left:34.90px;top:59.76px" width="8" height="8" viewBox="0 0 8 8"><path d="M4 0.5 L7.3 2.3 V5.8 L4 7.6 L0.7 5.8 V2.3 Z M0.7 2.3 L4 4.1 L7.3 2.3 M4 4.1 V7.6" fill="none" stroke="#9a9a9a" stroke-width="0.55"/></svg>
<div class="t" style="left:46.40px;top:58.76px;font-size:6.5px;line-height:10px;color:#1e1e1e">Part2</div>
<svg class="r" style="left:24.40px;top:69.37px" width="8" height="8" viewBox="0 0 8 8"><path d="M4 0.5 L7.3 2.3 V5.8 L4 7.6 L0.7 5.8 V2.3 Z M0.7 2.3 L4 4.1 L7.3 2.3 M4 4.1 V7.6" fill="none" stroke="#9a9a9a" stroke-width="0.55"/></svg>
<div class="t" style="left:35.90px;top:68.37px;font-size:6.5px;line-height:10px;color:#1e1e1e">Baseplate</div>
<svg class="r" style="left:13.80px;top:78.98px" width="8" height="8" viewBox="0 0 8 8"><circle cx="2" cy="1.8" r="1.1" fill="#d09020"/><circle cx="6" cy="1.8" r="1.1" fill="#d09020"/><circle cx="4" cy="4" r="1.2" fill="#1a9a3a"/><path d="M2 5.5 H6 V8 H2 Z" fill="#1a9a3a"/><path d="M0.3 3.3 H3 V5 H0.3 Z M5 3.3 H7.7 V5 H5 Z" fill="#d09020"/></svg>
<div class="t" style="left:25.30px;top:77.98px;font-size:6.5px;line-height:10px;color:#1e1e1e">Players</div>
<svg class="r" style="left:13.80px;top:88.59px" width="8" height="8" viewBox="0 0 8 8"><circle cx="4" cy="3" r="2.8" fill="#f0a020"/><rect x="2.8" y="5.6" width="2.4" height="1" fill="#f0a020"/><rect x="3.2" y="7" width="1.6" height="0.8" fill="#f0a020"/></svg>
<div class="t" style="left:25.30px;top:87.59px;font-size:6.5px;line-height:10px;color:#1e1e1e">Lighting</div>
<svg class="r" style="left:13.80px;top:98.20px" width="8" height="8" viewBox="0 0 8 8"><circle cx="3.4" cy="3.4" r="3.2" fill="#e89a30"/><circle cx="2.5" cy="2.4" r="1.2" fill="#f8c070"/><rect x="4.2" y="4.4" width="3.6" height="3.4" fill="#111"/><rect x="5" y="5.4" width="2" height="1.4" fill="#fff"/></svg>
<div class="t" style="left:25.30px;top:97.20px;font-size:6.5px;line-height:10px;color:#1e1e1e">MaterialService</div>
<svg class="r" style="left:13.80px;top:107.81px" width="8" height="8" viewBox="0 0 8 8"><path d="M1.5 3.6 V2.2 Q1.5 0.8 3 0.8 H5 Q6.5 0.8 6.5 2.2 V3.6" stroke="#2a6ab8" stroke-width="0.8" fill="none"/><path d="M0.6 3 L1.5 4 L2.4 3 Z M5.6 3 L6.5 4 L7.4 3 Z" fill="#2a6ab8"/><rect x="0.5" y="5.2" width="2.4" height="2.4" fill="#667"/><rect x="5.1" y="5.2" width="2.4" height="2.4" fill="#667"/></svg>
<div class="t" style="left:25.30px;top:106.81px;font-size:6.5px;line-height:10px;color:#1e1e1e">ReplicatedFirst</div>
<svg class="r" style="left:13.80px;top:117.42px" width="8" height="8" viewBox="0 0 8 8"><rect x="0.5" y="0.8" width="4.5" height="5" fill="#e8d0b0" stroke="#8a6030" stroke-width="0.5"/><rect x="2.8" y="2.8" width="4.8" height="4.8" fill="#f0e0c8" stroke="#8a6030" stroke-width="0.5"/></svg>
<div class="t" style="left:25.30px;top:116.42px;font-size:6.5px;line-height:10px;color:#1e1e1e">ReplicatedStorage</div>
<svg class="r" style="left:13.80px;top:127.03px" width="8" height="8" viewBox="0 0 8 8"><rect x="2.5" y="0.2" width="3" height="3" fill="#1a7a3a"/><rect x="0.2" y="2.6" width="3.4" height="3" fill="#156a30"/><rect x="3.6" y="2.4" width="3" height="2" fill="#1a8a40"/><rect x="4.2" y="4.6" width="3.6" height="3.4" fill="#111"/><rect x="5" y="5.4" width="2" height="1.6" fill="#ccc"/></svg>
<div class="t" style="left:25.30px;top:126.03px;font-size:6.5px;line-height:10px;color:#1e1e1e">ServerScriptService</div>
<svg class="r" style="left:13.80px;top:136.64px" width="8" height="8" viewBox="0 0 8 8"><rect x="2.5" y="0.2" width="3" height="3" fill="#1a7a3a"/><rect x="0.2" y="2.6" width="3.4" height="3" fill="#156a30"/><rect x="3.6" y="2.4" width="3" height="2" fill="#1a8a40"/><rect x="4.2" y="5" width="3.6" height="3" fill="#222"/></svg>
<div class="t" style="left:25.30px;top:135.64px;font-size:6.5px;line-height:10px;color:#1e1e1e">ServerStorage</div>
<svg class="r" style="left:13.80px;top:146.25px" width="8" height="8" viewBox="0 0 8 8"><rect x="0.5" y="1" width="7" height="6.5" fill="#e8b040"/><rect x="2" y="4" width="4.5" height="2.5" fill="#fff"/></svg>
<div class="t" style="left:25.30px;top:145.25px;font-size:6.5px;line-height:10px;color:#1e1e1e">StarterGui</div>
</div>
<div class="r" style="left:1016.8px;top:39.3px;width:7.2px;height:151.5px;background:#f0f0f0;border-left:0.7px solid #d8d8d8;box-sizing:border-box"></div>
<div class="r" style="left:1016.8px;top:39.3px;width:7.2px;height:7.5px;background:#fff;border:0.7px solid #d0d0d0;box-sizing:border-box"></div>
<svg class="r" style="left:1018.4px;top:41.8px" width="4" height="3" viewBox="0 0 4 3"><path d="M0.3 2.7 L2 0.5 L3.7 2.7 Z" fill="#555"/></svg>
<div class="r" style="left:1017.2px;top:47px;width:6.5px;height:101.7px;background:#fff;border:0.6px solid #d4d4d4;box-sizing:border-box"></div>
<div class="r" style="left:1017.2px;top:148.7px;width:6.5px;height:34.6px;background:#e6e6e6"></div>
<div class="r" style="left:1016.8px;top:183.3px;width:7.2px;height:7.5px;background:#fff;border:0.7px solid #d0d0d0;box-sizing:border-box"></div>
<svg class="r" style="left:1018.4px;top:185.8px" width="4" height="3" viewBox="0 0 4 3"><path d="M0.3 0.3 L2 2.5 L3.7 0.3 Z" fill="#555"/></svg>
<div class="r" style="left:903.3px;top:190.8px;width:120.7px;height:6.8px;background:#f0f0f0;border:0.7px solid #d0d0d0;box-sizing:border-box"></div>
<div class="r" style="left:911.5px;top:191.3px;width:69.5px;height:5.8px;background:#fff;border:0.6px solid #d6d6d6;box-sizing:border-box"></div>
<div class="r" style="left:903.3px;top:190.8px;width:7px;height:6.8px;background:#fff;border:0.7px solid #d0d0d0;box-sizing:border-box"></div>
<svg class="r" style="left:905.5px;top:192.7px" width="3" height="3.5" viewBox="0 0 3 4"><path d="M2.7 0.3 L0.5 2 L2.7 3.7 Z" fill="#555"/></svg>
<div class="r" style="left:1009.6px;top:190.8px;width:6.6px;height:6.8px;background:#fff;border:0.7px solid #d0d0d0;box-sizing:border-box"></div>
<svg class="r" style="left:1011.6px;top:192.7px" width="3" height="3.5" viewBox="0 0 3 4"><path d="M0.3 0.3 L2.5 2 L0.3 3.7 Z" fill="#555"/></svg>
<div class="r" style="left:1016.8px;top:190.8px;width:7.2px;height:6.8px;background:#fff"></div>
<div class="r" style="left:903.3px;top:200.5px;width:120.7px;height:12.5px;background:#e2e2e2"></div>
<div class="t" style="left:909.3px;top:202.50px;font-size:7.291px;line-height:10px;color:#1e1e1e;font-weight:normal;font-family:'Liberation Sans', sans-serif;transform:scaleX(0.8696);transform-origin:0 50%;">Properties - F...ortationParts*</div>
<svg class="r" style="left:995.5px;top:204.2px" width="6" height="6" viewBox="0 0 6 6"><path d="M1 2 L3 4 L5 2" stroke="#333" stroke-width="1" fill="none"/></svg>
<svg class="r" style="left:1004.7px;top:204.2px" width="6" height="6" viewBox="0 0 6 6"><path d="M0.8 2 V5.2 H4 M2.2 3.8 L5.2 0.8 M3.4 0.8 H5.2 V2.6" stroke="#333" stroke-width="0.7" fill="none"/></svg>
<svg class="r" style="left:1014.2px;top:204.2px" width="6" height="6" viewBox="0 0 6 6"><path d="M1 1 L5 5 M5 1 L1 5" stroke="#333" stroke-width="0.8" fill="none"/></svg>
<div class="r" style="left:903.3px;top:213px;width:120.7px;height:13px;background:#fff;border-left:0.7px solid #d0d0d0;border-bottom:0.7px solid #d0d0d0;box-sizing:border-box"></div>
<div class="t" style="left:906.8px;top:214.50px;font-size:7.590px;line-height:10px;color:#1e1e1e;font-weight:normal;font-family:'Liberation Sans', sans-serif;transform:scaleX(0.8696);transform-origin:0 50%;">Filter Properties (⇧⌘P)</div>
<svg class="r" style="left:1017.5px;top:218px" width="4" height="3" viewBox="0 0 4 3"><path d="M0.3 0.3 L2 2.5 L3.7 0.3 Z" fill="#666"/></svg>
<div class="r" style="left:903.3px;top:226px;width:120.7px;height:159px;background:#fff;border-left:0.7px solid #d0d0d0;box-sizing:border-box"></div>
<div class="r" style="left:904px;top:227.7px;width:120px;height:13.900000000000006px;background:#e3e3e3"></div>
<svg class="r" style="left:906.8px;top:232.85px" width="5" height="4" viewBox="0 0 5 4"><path d="M0.2 0.3 H4.8 L2.5 3.5 Z" fill="#111"/></svg>
<div class="t" style="left:917.8px;top:229.65px;font-size:7.590px;line-height:10px;color:#111;font-weight:bold;font-family:'Liberation Sans', sans-serif;transform:scaleX(0.8696);transform-origin:0 50%;">Data</div>
<div class="r" style="left:904px;top:254.45000000000002px;width:120px;height:0.7px;background:#ececec"></div>
<div class="t" style="left:916.7px;top:243.90px;font-size:7.475px;line-height:10px;color:#1e1e1e;font-weight:normal;font-family:'Liberation Sans', sans-serif;transform:scaleX(0.8696);transform-origin:0 50%;">Archivable</div>
<div class="r" style="left:904px;top:266.65px;width:120px;height:0.7px;background:#ececec"></div>
<div class="t" style="left:916.7px;top:256.60px;font-size:7.475px;line-height:10px;color:#9a9a9a;font-weight:normal;font-family:'Liberation Sans', sans-serif;transform:scaleX(0.8696);transform-origin:0 50%;">ClassName</div>
<div class="t" style="left:966px;top:256.60px;font-size:7.475px;line-height:10px;color:#9a9a9a;font-weight:normal;font-family:'Liberation Sans', sans-serif;transform:scaleX(0.8696);transform-origin:0 50%;">Folder</div>
<div class="r" style="left:904px;top:279.15px;width:120px;height:0.7px;background:#ececec"></div>
<div class="t" style="left:916.7px;top:268.95px;font-size:7.475px;line-height:10px;color:#1e1e1e;font-weight:normal;font-family:'Liberation Sans', sans-serif;transform:scaleX(0.8696);transform-origin:0 50%;">Name</div>
<div class="t" style="left:966px;top:268.95px;font-size:7.475px;line-height:10px;color:#1e1e1e;font-weight:normal;font-family:'Liberation Sans', sans-serif;transform:scaleX(0.8696);transform-origin:0 50%;">TeleportationParts</div>
<div class="r" style="left:904px;top:291.65px;width:120px;height:0.7px;background:#ececec"></div>
<div class="t" style="left:916.7px;top:281.45px;font-size:7.475px;line-height:10px;color:#1e1e1e;font-weight:normal;font-family:'Liberation Sans', sans-serif;transform:scaleX(0.8696);transform-origin:0 50%;">Parent</div>
<div class="t" style="left:966px;top:281.45px;font-size:7.475px;line-height:10px;color:#1e1e1e;font-weight:normal;font-family:'Liberation Sans', sans-serif;transform:scaleX(0.8696);transform-origin:0 50%;">Workspace</div>
<div class="r" style="left:963.1px;top:241.6px;width:0.7px;height:50.4px;background:#ececec"></div>
<div class="r" style="left:966.6px;top:244.8px;width:6.8px;height:6.8px;background:#1d7fd8;border-radius:1px"></div>
<svg class="r" style="left:966.6px;top:244.8px" width="7" height="7" viewBox="0 0 7 7"><path d="M1.5 3.5 L3 5 L5.6 2" stroke="#fff" stroke-width="0.9" fill="none"/></svg>
<div class="r" style="left:904px;top:292px;width:120px;height:13px;background:#e3e3e3"></div>
<svg class="r" style="left:906.8px;top:296.70px" width="5" height="4" viewBox="0 0 5 4"><path d="M0.2 0.3 H4.8 L2.5 3.5 Z" fill="#111"/></svg>
<div class="t" style="left:917.8px;top:293.50px;font-size:7.590px;line-height:10px;color:#111;font-weight:bold;font-family:'Liberation Sans', sans-serif;transform:scaleX(0.8696);transform-origin:0 50%;">Tags</div>
<svg class="r" style="left:1013.5px;top:295.50px" width="6" height="6" viewBox="0 0 6 6"><path d="M3 0.3 V5.7 M0.3 3 H5.7" stroke="#333" stroke-width="0.7"/></svg>
<div class="t" style="left:914.7px;top:307.20px;font-size:7.245px;line-height:10px;color:#a0a0a0;font-weight:normal;font-family:'Liberation Sans', sans-serif;transform:scaleX(0.8696);transform-origin:0 50%;">No Tags have been added yet</div>
<div class="r" style="left:904px;top:317.6px;width:120px;height:0.7px;background:#ececec"></div>
<div class="r" style="left:904px;top:318.2px;width:120px;height:12.800000000000011px;background:#e3e3e3"></div>
<svg class="r" style="left:906.8px;top:322.80px" width="5" height="4" viewBox="0 0 5 4"><path d="M0.2 0.3 H4.8 L2.5 3.5 Z" fill="#111"/></svg>
<div class="t" style="left:917.8px;top:319.60px;font-size:7.590px;line-height:10px;color:#111;font-weight:bold;font-family:'Liberation Sans', sans-serif;transform:scaleX(0.8696);transform-origin:0 50%;">Attributes</div>
<svg class="r" style="left:1013.5px;top:321.60px" width="6" height="6" viewBox="0 0 6 6"><path d="M3 0.3 V5.7 M0.3 3 H5.7" stroke="#333" stroke-width="0.7"/></svg>
<div class="t" style="left:914.7px;top:333.20px;font-size:7.245px;line-height:10px;color:#a0a0a0;font-weight:normal;font-family:'Liberation Sans', sans-serif;transform:scaleX(0.8696);transform-origin:0 50%;">No Attribute has been added yet</div>
<div class="r" style="left:904px;top:343px;width:120px;height:0.7px;background:#ececec"></div>
<div class="r" style="left:0px;top:385px;width:1024px;height:15px;background:#dfdfdf"></div>
<div class="r" style="left:0px;top:385px;width:1024px;height:1.8px;background:#ececec"></div>
<div class="t" style="left:478px;top:389.00px;font-size:7.360px;line-height:10px;color:#1e1e1e;font-weight:normal;font-family:'Liberation Sans', sans-serif;transform:scaleX(0.8696);transform-origin:50% 50%;width:40px;text-align:center">Output</div>
<svg class="r" style="left:995px;top:391.4px" width="6" height="6" viewBox="0 0 6 6"><path d="M1 2 L3 4 L5 2" stroke="#333" stroke-width="1" fill="none"/></svg>
<svg class="r" style="left:1004.6px;top:391.4px" width="6" height="6" viewBox="0 0 6 6"><path d="M0.8 2 V5.2 H4 M2.2 3.8 L5.2 0.8 M3.4 0.8 H5.2 V2.6" stroke="#333" stroke-width="0.7" fill="none"/></svg>
<svg class="r" style="left:1014.4px;top:391.4px" width="6" height="6" viewBox="0 0 6 6"><path d="M1 1 L5 5 M5 1 L1 5" stroke="#333" stroke-width="0.8" fill="none"/></svg>
<div class="r" style="left:0px;top:400px;width:1024px;height:15.3px;background:#ffffff"></div>
<div class="r" style="left:0.5px;top:401px;width:58.1px;height:13.5px;background:#fff;border:0.7px solid #cfcfcf;box-sizing:border-box"></div>
<div class="t" style="left:6.0px;top:402.80px;font-size:7.130px;line-height:10px;color:#1e1e1e;font-weight:normal;font-family:'Liberation Sans', sans-serif;transform:scaleX(0.8696);transform-origin:0 50%;">All Messages</div>
<svg class="r" style="left:49.60px;top:406.5px" width="5" height="4" viewBox="0 0 5 4"><path d="M0.5 1 L2.5 3 L4.5 1" stroke="#333" stroke-width="0.8" fill="none"/></svg>
<div class="r" style="left:62.5px;top:401px;width:57.0px;height:13.5px;background:#fff;border:0.7px solid #cfcfcf;box-sizing:border-box"></div>
<div class="t" style="left:68.0px;top:402.80px;font-size:7.130px;line-height:10px;color:#1e1e1e;font-weight:normal;font-family:'Liberation Sans', sans-serif;transform:scaleX(0.8696);transform-origin:0 50%;">All Contexts</div>
<svg class="r" style="left:110.50px;top:406.5px" width="5" height="4" viewBox="0 0 5 4"><path d="M0.5 1 L2.5 3 L4.5 1" stroke="#333" stroke-width="0.8" fill="none"/></svg>
<div class="r" style="left:840.3px;top:400.9px;width:149.4px;height:12.5px;background:#fff;border:0.7px solid #cfcfcf;box-sizing:border-box"></div>
<div class="t" style="left:844px;top:402.20px;font-size:7.590px;line-height:10px;color:#1e1e1e;font-weight:normal;font-family:'Liberation Sans', sans-serif;transform:scaleX(0.8696);transform-origin:0 50%;">Filter...</div>
<svg class="r" style="left:983px;top:406px" width="4" height="3" viewBox="0 0 4 3"><path d="M0.3 0.3 L2 2.5 L3.7 0.3 Z" fill="#666"/></svg>
<svg class="r" style="left:996.5px;top:401.5px" width="10" height="12" viewBox="0 0 10 12"><rect x="4.3" y="0.3" width="1.2" height="5" fill="#444"/><path d="M2.3 5.2 H7.6 L8.8 10.8 H1.2 Z" fill="#555"/><path d="M3 7 V10.5 M5 7 V10.5 M7 7 V10.5" stroke="#ddd" stroke-width="0.5"/><rect x="0.3" y="10.8" width="9.4" height="0.9" fill="#333"/></svg>
<div class="t" style="left:1013.5px;top:401.50px;font-size:8.050px;line-height:10px;color:#555;font-weight:normal;font-family:'Liberation Sans', sans-serif;transform:scaleX(0.8696);transform-origin:0 50%;">···</div>
<div class="r" style="left:0px;top:415.3px;width:1024px;height:73.5px;background:#fff;border-top:0.7px solid #d4d4d4;box-sizing:border-box"></div>
<div class="r" style="left:1016px;top:416px;width:8px;height:72.8px;background:#efefef;border-left:0.7px solid #d8d8d8;box-sizing:border-box"></div>
<div class="r" style="left:1016px;top:416px;width:8px;height:7px;background:#fff;border:0.7px solid #d0d0d0;box-sizing:border-box"></div>
<svg class="r" style="left:1018px;top:418.2px" width="4" height="3" viewBox="0 0 4 3"><path d="M0.3 2.7 L2 0.5 L3.7 2.7 Z" fill="#555"/></svg>
<div class="r" style="left:1016.7px;top:424.6px;width:6.6px;height:49.4px;background:#ebebeb;border:0.6px solid #d0d0d0;box-sizing:border-box"></div>
<div class="r" style="left:1016.7px;top:474px;width:6.6px;height:7.5px;background:#f8f8f8"></div>
<div class="r" style="left:1016px;top:481.5px;width:8px;height:7px;background:#fff;border:0.7px solid #d0d0d0;box-sizing:border-box"></div>
<svg class="r" style="left:1018px;top:483.5px" width="4" height="3" viewBox="0 0 4 3"><path d="M0.3 0.3 L2 2.5 L3.7 0.3 Z" fill="#555"/></svg>
<div class="t mono" style="left:10.7px;top:415.80px;font-size:7.45px;line-height:10px;letter-spacing:0.025px"><span style="color:#7a7a7a">09:27:38.741</span>  <span style="color:#1c2890;">Stack Begin</span>  <span style="color:#b0b0b0">-</span>  <span style="color:#6e6e6e">Studio</span></div>
<div class="t mono" style="left:10.7px;top:424.97px;font-size:7.45px;line-height:10px;letter-spacing:0.025px"><span style="color:#7a7a7a">09:27:38.741</span>  <span style="color:#1c2890;">Script &#x27;Workspace.TeleportationParts.Script&#x27;, Line 18</span>  <span style="color:#b0b0b0">-</span>  <span style="color:#6e6e6e">Studio</span> <span style="color:#444;font-weight:bold">-</span> <span style="color:#6e6e6e">Script:18</span></div>
<div class="t mono" style="left:10.7px;top:434.14px;font-size:7.45px;line-height:10px;letter-spacing:0.025px"><span style="color:#7a7a7a">09:27:38.741</span>  <span style="color:#1c2890;">Stack End</span>  <span style="color:#b0b0b0">-</span>  <span style="color:#6e6e6e">Studio</span></div>
<div class="t mono" style="left:10.7px;top:443.31px;font-size:7.45px;line-height:10px;letter-spacing:0.025px"><span style="color:#7a7a7a">09:27:38.741</span>  <span style="color:#cc1414;font-weight:bold;">Workspace.TeleportationParts.Script:18: attempt to index nil with &#x27;CFrame&#x27;</span>  <span style="color:#b0b0b0">-</span>  <span style="color:#6e6e6e">Server</span> <span style="color:#444;font-weight:bold">-</span> <span style="color:#6e6e6e">Script:18</span></div>
<div class="t mono" style="left:10.7px;top:452.48px;font-size:7.45px;line-height:10px;letter-spacing:0.025px"><span style="color:#7a7a7a">09:27:38.742</span>  <span style="color:#1c2890;">Stack Begin</span>  <span style="color:#b0b0b0">-</span>  <span style="color:#6e6e6e">Studio</span></div>
<div class="t mono" style="left:10.7px;top:461.65px;font-size:7.45px;line-height:10px;letter-spacing:0.025px"><span style="color:#7a7a7a">09:27:38.742</span>  <span style="color:#1c2890;">Script &#x27;Workspace.TeleportationParts.Script&#x27;, Line 18</span>  <span style="color:#b0b0b0">-</span>  <span style="color:#6e6e6e">Studio</span> <span style="color:#444;font-weight:bold">-</span> <span style="color:#6e6e6e">Script:18</span></div>
<div class="t mono" style="left:10.7px;top:470.82px;font-size:7.45px;line-height:10px;letter-spacing:0.025px"><span style="color:#7a7a7a">09:27:38.742</span>  <span style="color:#1c2890;">Stack End</span>  <span style="color:#b0b0b0">-</span>  <span style="color:#6e6e6e">Studio</span></div>
<div class="r" style="left:2px;top:444.2px;width:3.8px;height:8.6px;background:#2eb84e"></div>
<div class="r" style="left:0px;top:487.6px;width:1024px;height:1.6px;background:#cfcfcf"></div>
<div class="r" style="left:0px;top:489.2px;width:1024px;height:12.3px;background:#fff"></div>
<div class="r" style="left:0px;top:501.3px;width:1024px;height:1px;background:#b4b4b4"></div>
<div class="r" style="left:1px;top:492px;width:0.6px;height:7px;background:#999"></div>
<div class="t" style="left:6.4px;top:490.50px;font-size:7.450px;line-height:10px;color:#1e1e1e;font-weight:normal;font-family:'Liberation Mono', monospace;letter-spacing:-0.300px">Run a command</div>
<svg class="r" style="left:1017.5px;top:494px" width="4" height="3" viewBox="0 0 4 3"><path d="M0.3 0.3 L2 2.5 L3.7 0.3 Z" fill="#666"/></svg>
<div class="r" style="left:0px;top:502.3px;width:1024px;height:15.7px;background:#fff"></div>
</body></html>
